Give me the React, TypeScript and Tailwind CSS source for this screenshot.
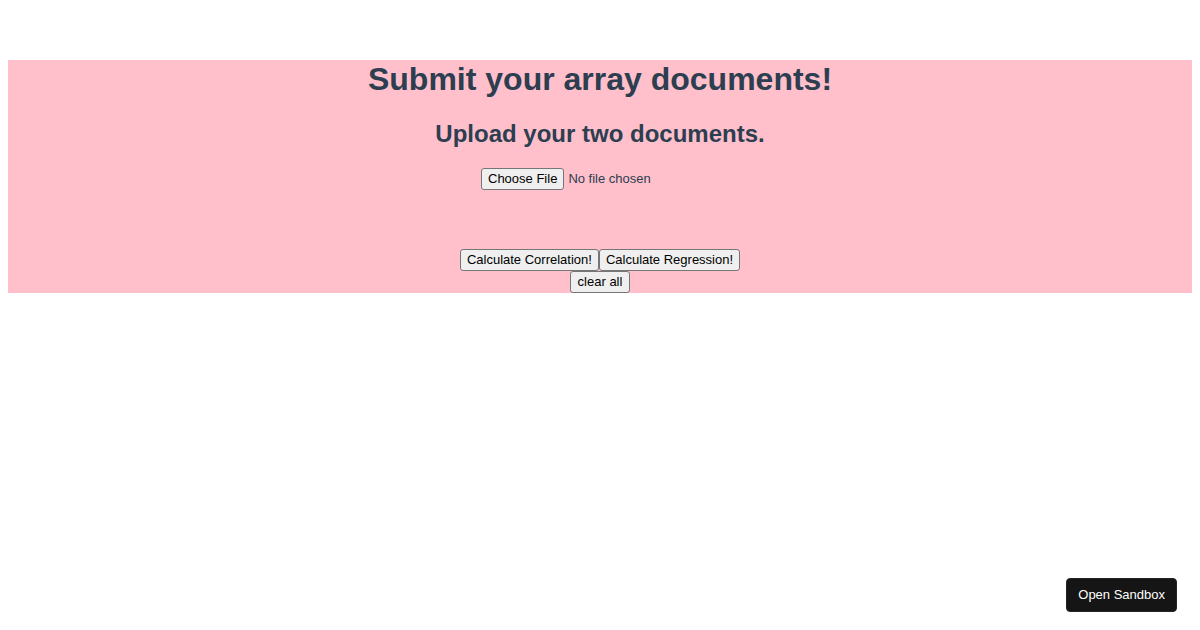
import { useRef, useState } from "react";

const controlClass =
  "h-[22px] rounded-[3px] border border-[#767676] bg-[#efefef] text-[13px] leading-4 text-black";

const App = () => {
  const fileRef = useRef<HTMLInputElement>(null);
  const [result, setResult] = useState("");

  const clearAll = () => {
    if (fileRef.current) fileRef.current.value = "";
    setResult("");
  };

  return (
    <div className="px-2 pt-[60px] font-['Liberation_Sans',Arial,sans-serif] text-[#2c3e50] antialiased">
      <main className="flex flex-col items-center bg-[#ffc0cb] text-center">
        <h1 className="text-[32px] font-bold leading-[38px]">Submit your array documents!</h1>
        <h2 className="mt-[22px] text-2xl font-bold leading-7">Upload your two documents.</h2>
        <input
          ref={fileRef}
          type="file"
          aria-label="Upload documents"
          className="mt-5 h-[22px] w-[238px] text-[13px] leading-4 file:mr-1 file:h-[22px] file:rounded-[3px] file:border file:border-solid file:border-[#767676] file:bg-[#efefef] file:px-1.5 file:text-[13px] file:text-black"
        />
        <p className="h-[59px]">{result}</p>
        <div className="flex">
          <button type="button" className={`${controlClass} px-1.5`} onClick={() => setResult("Correlation")}>
            Calculate Correlation!
          </button>
          <button type="button" className={`${controlClass} px-1.5`} onClick={() => setResult("Regression")}>
            Calculate Regression!
          </button>
        </div>
        <button type="button" className={`${controlClass} px-[7px]`} onClick={clearAll}>
          clear all
        </button>
      </main>
      <button
        type="button"
        className="fixed bottom-[18px] right-[23px] h-[34px] rounded border border-[#252525] bg-[#151515] px-[11px] text-[13px] text-white"
      >
        Open Sandbox
      </button>
    </div>
  );
};

export default App;
